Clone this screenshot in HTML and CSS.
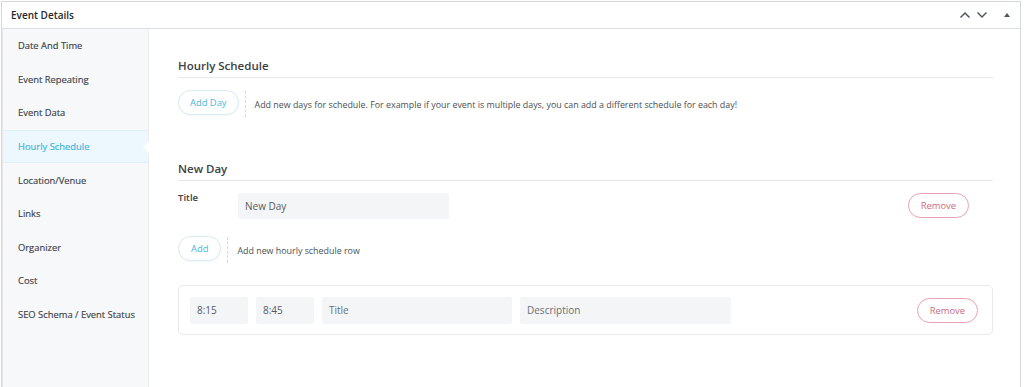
FILE: index.html
```html
<!DOCTYPE html>
<html>
<head>
<meta charset="utf-8">
<link rel="stylesheet" href="styles.css">
</head>
<body>
<div class="frame">
  <div class="box-head">
    <span class="box-title">Event Details</span>
    <div class="head-tools">
      <svg class="chev" width="12" height="8" viewBox="0 0 12 8"><path d="M1.5 6.5 L6 2 L10.5 6.5" fill="none" stroke="#50575e" stroke-width="1.5"/></svg>
      <svg class="chev" width="12" height="8" viewBox="0 0 12 8"><path d="M1.5 1.5 L6 6 L10.5 1.5" fill="none" stroke="#50575e" stroke-width="1.5"/></svg>
      <svg class="tri" width="8" height="6" viewBox="0 0 8 6"><path d="M4 1 L7 5 L1 5 Z" fill="#50575e"/></svg>
    </div>
  </div>
  <div class="box-body">
    <ul class="side">
      <li>Date And Time</li>
      <li>Event Repeating</li>
      <li>Event Data</li>
      <li class="active">Hourly Schedule</li>
      <li>Location/Venue</li>
      <li>Links</li>
      <li>Organizer</li>
      <li>Cost</li>
      <li>SEO Schema / Event Status</li>
    </ul>
    <div class="main">
      <h4 class="sec-title">Hourly Schedule</h4>
      <div class="add-row">
        <button class="pill blue">Add Day</button>
        <span class="hint">Add new days for schedule. For example if your event is multiple days, you can add a different schedule for each day!</span>
      </div>

      <h4 class="sec-title second">New Day</h4>
      <div class="title-row">
        <label class="lbl">Title</label>
        <div class="field wide">New Day</div>
        <button class="pill red">Remove</button>
      </div>
      <div class="add-row second">
        <button class="pill blue small">Add</button>
        <span class="hint">Add new hourly schedule row</span>
      </div>

      <div class="hour-row">
        <div class="field time">8:15</div>
        <div class="field time">8:45</div>
        <div class="field mid">Title</div>
        <div class="field mid">Description</div>
        <button class="pill red">Remove</button>
      </div>
    </div>
  </div>
</div>
</body>
</html>
```
FILE: styles.css
```css
* { box-sizing: border-box; }
html, body { margin: 0; padding: 0; background: #fff; }
body {
  font-family: "Open Sans", "Noto Sans", sans-serif;
  color: #444;
  width: 1024px;
  height: 387px;
  overflow: hidden;
}
.frame {
  margin: 1px 3px 0 1px;
  border: 1px solid #d5d8dc;
  border-bottom: none;
  height: 386px;
  display: flex;
  flex-direction: column;
}
.box-head {
  height: 27px;
  border-bottom: 1px solid #dcdfe2;
  display: flex;
  align-items: center;
  justify-content: space-between;
  padding: 0 9px 0 9px;
  flex: none;
}
.box-title {
  font-size: 10px;
  font-weight: 600;
  color: #23282d;
}
.head-tools {
  display: flex;
  align-items: center;
  gap: 5px;
}
.head-tools .tri { margin-left: 10px; }
.box-body {
  flex: 1;
  display: flex;
}
.side {
  list-style: none;
  margin: 0;
  padding: 0;
  width: 147px;
  flex: none;
  background: #f7f8fa;
  border-right: 1px solid #ebedef;
  border-left: 1px solid #e8e8e8;
}
.side li {
  height: 33.6px;
  display: flex;
  align-items: center;
  padding-left: 15px;
  font-size: 9.4px;
  font-weight: 500;
  color: #3c4146;
  position: relative;
  -webkit-text-stroke: 0.15px currentColor;
}
.side li.active {
  background: #ecf8fd;
  color: #3fb3dc;
  border-top: 1px solid #e0f0f7;
  border-bottom: 1px solid #e0f0f7;
}
.side li.active::after {
  content: "";
  position: absolute;
  right: -1px;
  top: 50%;
  margin-top: -6px;
  border-style: solid;
  border-width: 6px 6px 6px 0;
  border-color: transparent #fff transparent transparent;
}
.main {
  flex: 1;
  padding: 28px 27px 0 29px;
}
.sec-title {
  margin: 0;
  font-size: 11.5px;
  font-weight: 600;
  color: #3c4043;
  line-height: 18px;
  padding-bottom: 2px;
  border-bottom: 1px solid #e6e8ea;
}
.sec-title.second { margin-top: 43px; }
.add-row {
  margin-top: 12px;
  display: flex;
  align-items: flex-start;
}
.add-row.second { margin-top: 17px; }
.pill {
  font-family: inherit;
  background: #fff;
  border-radius: 14px;
  height: 25px;
  padding: 0 11px;
  font-size: 9.4px;
  cursor: pointer;
}
.pill.blue {
  border: 1px solid #d6ebf2;
  color: #4bb5d9;
  box-shadow: 0 1px 2px rgba(0, 0, 0, 0.04);
}
.pill.small { padding: 0 12px; }
.pill.red {
  border: 1px solid #e8a3b3;
  color: #cb6a82;
  padding: 0 12px;
}
.hint {
  margin-left: 6px;
  border-left: 1px dashed #d9d9d9;
  padding-left: 9px;
  height: 26px;
  display: flex;
  align-items: center;
  font-size: 8.9px;
  color: #4a5055;
  margin-top: 1px;
}
.title-row {
  margin-top: 12px;
  display: flex;
  align-items: flex-start;
}
.lbl {
  width: 60px;
  font-size: 9.6px;
  font-weight: 600;
  color: #3c4043;
  line-height: 10px;
}
.field {
  background: #f3f5f7;
  border-radius: 3px;
  height: 26px;
  display: flex;
  align-items: center;
  padding-left: 7px;
  font-size: 10px;
  color: #555b61;
}
.field.wide { width: 211px; }
.title-row .pill.red { margin-left: auto; margin-right: 24px; }
.hour-row {
  margin-top: 22px;
  border: 1px solid #e8eaec;
  border-radius: 5px;
  height: 50px;
  display: flex;
  align-items: center;
  padding: 0 14px 0 11px;
  gap: 8px;
}
.field.time { width: 58px; height: 27px; }
.field.mid { width: 190px; height: 27px; color: #6a7075; }
.field.mid + .field.mid { width: 211px; }
.hour-row .pill.red { margin-left: auto; }
```
